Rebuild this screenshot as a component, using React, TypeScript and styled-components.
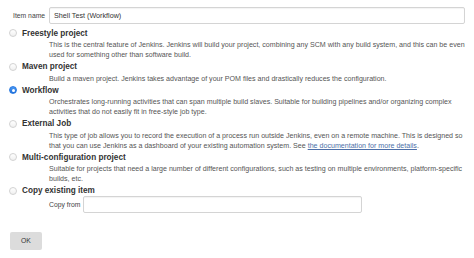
import * as React from 'react'
import styled, { createGlobalStyle } from 'styled-components'

const GlobalStyle = createGlobalStyle`
  html, body {
    margin: 0;
    padding: 0;
    background: #fff;
  }
  body {
    font-family: 'Liberation Sans', Arial, sans-serif;
    color: #333;
  }
`

const Page = styled.form`
  width: 474px;
  height: 258px;
  padding: 7px 9px 0 9px;
  box-sizing: border-box;
  overflow: hidden;
`

const NameRow = styled.div`
  display: flex;
  align-items: center;
  height: 16px;
`

const FieldLabel = styled.label<{ width: number }>`
  flex: 0 0 ${p => p.width}px;
  font-size: 6.8px;
  color: #444;
  padding-left: ${p => (p.width > 36 ? 4 : 0)}px;
  box-sizing: border-box;
  white-space: nowrap;
`

const TextInput = styled.input<{ width?: number }>`
  box-sizing: border-box;
  height: 17px;
  width: ${p => (p.width ? `${p.width}px` : 'auto')};
  flex: ${p => (p.width ? '0 0 auto' : '1 1 auto')};
  min-width: 0;
  border: 1px solid #d4d4d4;
  border-radius: 2px;
  box-shadow: inset 0 1px 1px rgba(0, 0, 0, 0.05);
  padding: 0 4px;
  font-family: 'Liberation Sans', Arial, sans-serif;
  font-size: 7.2px;
  color: #333;
  outline: none;
`

const Options = styled.div`
  margin-top: 5px;
  display: flex;
  flex-direction: column;
  gap: 1.6px;
`

const Option = styled.div``

const OptionHead = styled.div`
  display: flex;
  align-items: center;
  height: 10px;
`

const Radio = styled.span<{ checked?: boolean }>`
  flex: 0 0 auto;
  width: 8px;
  height: 8px;
  box-sizing: border-box;
  border-radius: 50%;
  margin-right: 5px;
  display: flex;
  align-items: center;
  justify-content: center;
  border: 1px solid ${p => (p.checked ? '#2a7ae2' : '#d2d2d2')};
  background: ${p =>
    p.checked ? 'linear-gradient(#4a9af5, #1f6fd8)' : 'linear-gradient(#ffffff, #f0f0f0)'};
  &::after {
    content: '';
    width: 3px;
    height: 3px;
    border-radius: 50%;
    background: #fff;
    display: ${p => (p.checked ? 'block' : 'none')};
  }
`

const OptionLabel = styled.span`
  font-size: 8.2px;
  font-weight: bold;
  color: #333;
  white-space: nowrap;
`

const Description = styled.div`
  margin: 2px 0 0 40px;
  font-size: 7.1px;
  line-height: 10px;
  color: #555;
  white-space: nowrap;
`

const DocLink = styled.a`
  color: #4d6fa8;
  text-decoration: underline;
`

const CopyRow = styled.div`
  display: flex;
  align-items: center;
  margin-left: 40px;
  height: 17px;
`

const OkButton = styled.button`
  display: block;
  margin-top: 19px;
  margin-left: 1px;
  width: 32px;
  height: 18px;
  border: none;
  border-radius: 2px;
  background: #dcdcdc;
  font-family: 'Liberation Sans', Arial, sans-serif;
  font-size: 6.8px;
  color: #333;
  padding: 0;
`

type ProjectType = {
  name: string
  checked?: boolean
  lines: string[]
  link?: string
}

const projectTypes: ProjectType[] = [
  {
    name: 'Freestyle project',
    lines: [
      'This is the central feature of Jenkins. Jenkins will build your project, combining any SCM with any build system, and this can be even',
      'used for something other than software build.',
    ],
  },
  {
    name: 'Maven project',
    lines: [
      'Build a maven project. Jenkins takes advantage of your POM files and drastically reduces the configuration.',
    ],
  },
  {
    name: 'Workflow',
    checked: true,
    lines: [
      'Orchestrates long-running activities that can span multiple build slaves. Suitable for building pipelines and/or organizing complex',
      'activities that do not easily fit in free-style job type.',
    ],
  },
  {
    name: 'External Job',
    lines: [
      'This type of job allows you to record the execution of a process run outside Jenkins, even on a remote machine. This is designed so',
      'that you can use Jenkins as a dashboard of your existing automation system. See ',
    ],
    link: 'the documentation for more details',
  },
  {
    name: 'Multi-configuration project',
    lines: [
      'Suitable for projects that need a large number of different configurations, such as testing on multiple environments, platform-specific',
      'builds, etc.',
    ],
  },
]

export default function App() {
  return (
    <>
      <GlobalStyle />
      <Page onSubmit={e => e.preventDefault()}>
        <NameRow>
          <FieldLabel width={40}>Item name</FieldLabel>
          <TextInput defaultValue="Shell Test (Workflow)" />
        </NameRow>
        <Options>
          {projectTypes.map(t => (
            <Option key={t.name}>
              <OptionHead>
                <Radio checked={t.checked} />
                <OptionLabel>{t.name}</OptionLabel>
              </OptionHead>
              <Description>
                {t.lines.map((line, i) => (
                  <React.Fragment key={i}>
                    {i > 0 && <br />}
                    {line}
                  </React.Fragment>
                ))}
                {t.link && (
                  <>
                    <DocLink href="#">{t.link}</DocLink>.
                  </>
                )}
              </Description>
            </Option>
          ))}
          <Option>
            <OptionHead>
              <Radio />
              <OptionLabel>Copy existing item</OptionLabel>
            </OptionHead>
            <CopyRow>
              <FieldLabel width={34}>Copy from</FieldLabel>
              <TextInput width={279} />
            </CopyRow>
          </Option>
        </Options>
        <OkButton type="submit">OK</OkButton>
      </Page>
    </>
  )
}
